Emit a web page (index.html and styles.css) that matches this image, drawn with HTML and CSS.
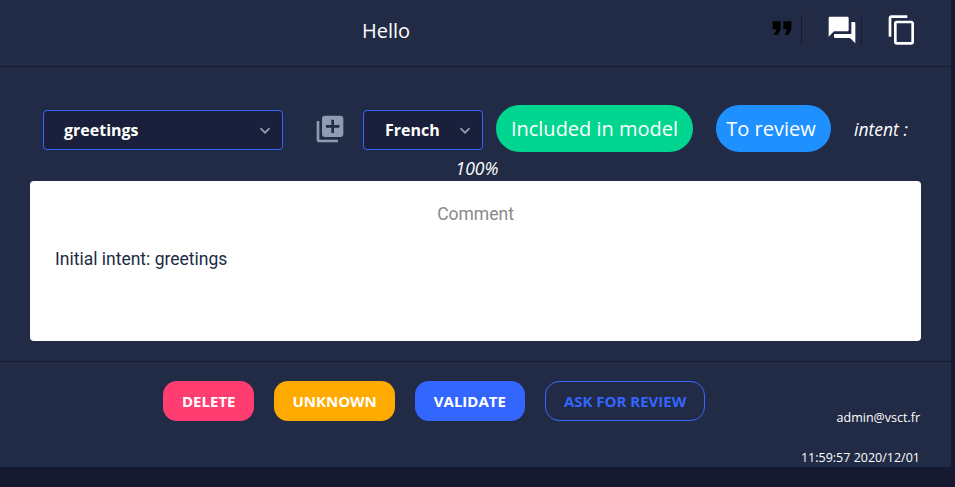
FILE: index.html
```html
<!DOCTYPE html>
<html>
<head>
  <title>Hello</title>
  <link rel="stylesheet" href="styles.css">
</head>
<body>
  <div class="card">
    <div class="card-header">
      <div class="sentence">Hello</div>
      <div class="header-btn">
        <svg class="icon icon-black" viewBox="0 0 24 24"><path d="M6 17h3l2-4V7H5v6h3zm8 0h3l2-4V7h-6v6h3z"/></svg>
      </div>
      <div class="header-btn">
        <svg class="icon" viewBox="0 0 24 24"><path d="M21 6h-2v9H6v2c0 .55.45 1 1 1h11l4 4V7c0-.55-.45-1-1-1zm-4 6V3c0-.55-.45-1-1-1H3c-.55 0-1 .45-1 1v14l4-4h10c.55 0 1-.45 1-1z"/></svg>
      </div>
      <div class="header-btn last">
        <svg class="icon" viewBox="0 0 24 24"><path d="M16 1H4c-1.1 0-2 .9-2 2v14h2V3h12V1zm3 4H8c-1.1 0-2 .9-2 2v14c0 1.1.9 2 2 2h11c1.1 0 2-.9 2-2V7c0-1.1-.9-2-2-2zm0 16H8V7h11v14z"/></svg>
      </div>
    </div>

    <div class="card-body">
      <div class="toolbar">
        <div class="select select-intent">
          <span>greetings</span>
          <svg class="chevron" viewBox="0 0 24 24"><path d="M7 10l5 5 5-5"/></svg>
        </div>
        <svg class="icon icon-add" viewBox="0 0 24 24"><path d="M4 6H2v14c0 1.1.9 2 2 2h14v-2H4V6zm16-4H8c-1.1 0-2 .9-2 2v12c0 1.1.9 2 2 2h12c1.1 0 2-.9 2-2V4c0-1.1-.9-2-2-2zm-1 9h-4v4h-2v-4H9V9h4V5h2v4h4v2z"/></svg>
        <div class="select select-locale">
          <span>French</span>
          <svg class="chevron" viewBox="0 0 24 24"><path d="M7 10l5 5 5-5"/></svg>
        </div>
        <div class="pill pill-success">Included in model</div>
        <div class="pill pill-info">To review</div>
        <div class="intent-label">intent :</div>
      </div>
      <div class="percent">100%</div>

      <div class="comment-box">
        <div class="comment-title">Comment</div>
        <div class="comment-text">Initial intent: greetings</div>
      </div>
    </div>

    <div class="card-footer">
      <div class="actions">
        <button class="btn btn-delete">Delete</button>
        <button class="btn btn-unknown">Unknown</button>
        <button class="btn btn-validate">Validate</button>
        <button class="btn btn-review">Ask for review</button>
      </div>
      <div class="meta">
        <div class="meta-user">admin@vsct.fr</div>
        <div class="meta-date">11:59:57 2020/12/01</div>
      </div>
    </div>
  </div>
</body>
</html>
```

FILE: styles.css
```css
body {
  font-family: "Open Sans", sans-serif;
  background-color: #151a30;
  color: #fff;
  margin: 0;
  padding: 0;
}

.card {
  width: 951px;
  height: 467px;
  background-color: #222b45;
  border-bottom-right-radius: 4px;
  display: flex;
  flex-direction: column;
}

/* header */
.card-header {
  height: 60px;
  display: flex;
  align-items: center;
  padding: 0 33px 6px 30px;
  border-bottom: 1px solid #151a30;
}

.sentence {
  flex: 1;
  text-align: center;
  font-size: 20px;
}

.header-btn {
  height: 30px;
  width: 35px;
  padding-left: 24px;
  display: flex;
  align-items: center;
  border-right: 1px solid #151a30;
}

.header-btn.last {
  border-right: none;
  width: 32px;
}

.icon {
  width: 32px;
  height: 32px;
  fill: #fff;
  flex-shrink: 0;
}

.icon-black {
  fill: #000;
  margin-top: -4px;
}

.icon-add {
  fill: #8f9bb3;
  margin-left: 31px;
}

/* toolbar */
.toolbar {
  display: flex;
  align-items: center;
  height: 47px;
  margin-top: 38px;
  padding-left: 43px;
}

.select {
  align-self: flex-start;
  height: 40px;
  margin-top: 5px;
  box-sizing: border-box;
  background-color: #1a1f3b;
  border: 1px solid #3366ff;
  border-radius: 4px;
  display: flex;
  align-items: center;
  justify-content: space-between;
  font-size: 16px;
  font-weight: 700;
}

.select-intent {
  width: 240px;
  padding: 0 6px 0 20px;
}

.select-locale {
  width: 120px;
  margin-left: 17px;
  padding: 0 6px 0 21px;
}

.chevron {
  width: 22px;
  height: 22px;
  fill: none;
  stroke: #8f9bb3;
  stroke-width: 2;
}

.pill {
  height: 47px;
  border-radius: 24px;
  display: flex;
  align-items: center;
  justify-content: center;
  font-size: 20px;
}

.pill-success {
  width: 197px;
  margin-left: 13px;
  background-color: #00d68f;
}

.pill-info {
  width: 110px;
  padding-right: 5px;
  margin-left: 23px;
  background-color: #1e90ff;
}

.intent-label {
  margin-left: 23px;
  font-size: 17.5px;
  font-style: italic;
}

.percent {
  height: 29px;
  line-height: 33px;
  text-align: center;
  padding-left: 3px;
  font-size: 17.5px;
  font-style: italic;
}

/* comment */
.comment-box {
  margin: 0 30px;
  height: 160px;
  box-sizing: border-box;
  background-color: #fff;
  border-radius: 4px;
  padding: 22px 25px;
  font-family: Roboto, sans-serif;
  font-size: 17.5px;
}

.comment-title {
  text-align: center;
  color: #8a8a8a;
  line-height: 22px;
}

.comment-text {
  margin-top: 23px;
  color: #222b45;
  line-height: 22px;
}

/* footer */
.card-footer {
  margin-top: 20px;
  border-top: 1px solid #151a30;
  flex: 1;
  display: flex;
  justify-content: space-between;
  padding: 19px 31px 0 163px;
}

.actions {
  display: flex;
  align-items: flex-start;
  gap: 20px;
}

.btn {
  height: 40px;
  padding: 0 18px;
  border: 1px solid transparent;
  border-radius: 14px;
  font-family: "Open Sans", sans-serif;
  font-size: 15px;
  font-weight: 700;
  text-transform: uppercase;
  color: #fff;
  cursor: pointer;
}

.btn-delete {
  background-color: #ff3d71;
}

.btn-unknown {
  padding: 0 17px;
  background-color: #ffaa00;
}

.btn-validate {
  background-color: #3366ff;
}

.btn-review {
  background-color: transparent;
  border-color: #3366ff;
  color: #3366ff;
}

.meta {
  text-align: right;
  font-size: 12.5px;
}

.meta-user {
  margin-top: 28px;
  line-height: 18px;
}

.meta-date {
  margin-top: 22px;
  line-height: 18px;
}
```
